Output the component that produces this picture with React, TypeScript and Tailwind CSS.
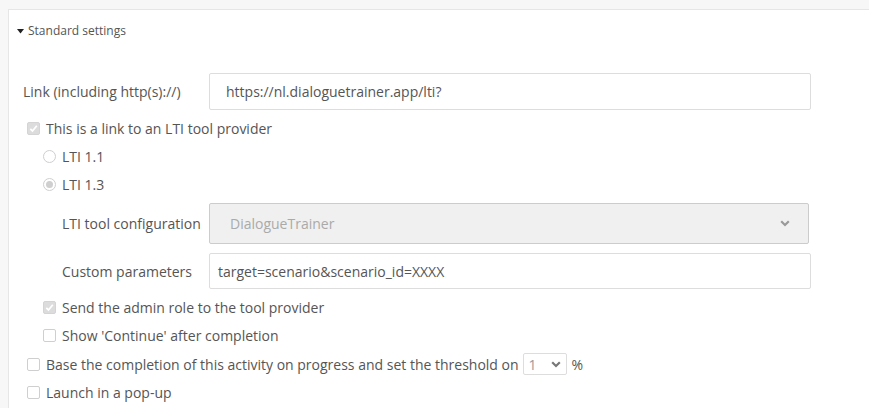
import React from 'react';

const Check = ({ checked = false }: { checked?: boolean }) => (
  <span
    className={`flex h-[13px] w-[13px] shrink-0 items-center justify-center rounded-[2px] border ${
      checked ? 'border-[#d4d4d4] bg-[#dcdcdc]' : 'border-[#cfcfcf] bg-white'
    }`}
  >
    {checked && (
      <svg width="9" height="9" viewBox="0 0 9 9">
        <path d="M1.3 4.8 L3.5 7 L7.8 1.8" fill="none" stroke="#fff" strokeWidth="1.8" />
      </svg>
    )}
  </span>
);

const Radio = ({ checked = false }: { checked?: boolean }) => (
  <span className="flex h-[13px] w-[13px] shrink-0 items-center justify-center rounded-full border border-[#cfcfcf] bg-white">
    {checked && <span className="h-[7px] w-[7px] rounded-full bg-[#cfcfcf]" />}
  </span>
);

const Chevron = ({ color = '#8a8a8a' }: { color?: string }) => (
  <svg width="10" height="7" viewBox="0 0 10 7">
    <path d="M1.2 1.3 L5 5 L8.8 1.3" fill="none" stroke={color} strokeWidth="2.2" />
  </svg>
);

const Option: React.FC<{ indent?: boolean; children: React.ReactNode }> = ({ indent, children }) => (
  <div className={`flex h-[28px] items-center gap-[6px] ${indent ? 'pl-[34px]' : 'pl-[18px]'}`}>
    {children}
  </div>
);

export default function App() {
  return (
    <div
      className="h-[408px] w-[869px] overflow-hidden bg-[#f7f7f7] pl-[8px] pt-[9px] text-[14px] text-[#555]"
      style={{ fontFamily: '"Open Sans", "Liberation Sans", sans-serif' }}
    >
      <div className="h-[420px] border border-r-0 border-[#e6e6e6] bg-white">
        {/* header */}
        <div className="flex h-[42px] items-center gap-[4px] pl-[8px] text-[12px]">
          <svg width="7" height="5" viewBox="0 0 7 5">
            <path d="M0 0 H7 L3.5 4.5 Z" fill="#222" />
          </svg>
          <span>Standard settings</span>
        </div>

        {/* link */}
        <div className="mt-[21px] flex items-center">
          <label className="w-[200px] pl-[14px]">Link (including http(s)://)</label>
          <div className="flex h-[37px] w-[602px] items-center rounded-[2px] border border-[#ddd] px-[16px]">
            https://nl.dialoguetrainer.app/lti?
          </div>
        </div>

        <div className="mt-[4px]">
          <Option>
            <Check checked />
            <span>This is a link to an LTI tool provider</span>
          </Option>
          <Option indent>
            <Radio />
            <span>LTI 1.1</span>
          </Option>
          <Option indent>
            <Radio checked />
            <span>LTI 1.3</span>
          </Option>
        </div>

        <div className="mt-[5px] flex items-center">
          <label className="w-[200px] pl-[53px]">LTI tool configuration</label>
          <div className="flex h-[41px] w-[600px] items-center justify-between rounded-[2px] border border-[#ccc] bg-[#f0f0f0] pl-[20px] pr-[18px] text-[#aaa]">
            <span>DialogueTrainer</span>
            <Chevron color="#999" />
          </div>
        </div>

        <div className="mt-[9px] flex items-center">
          <label className="w-[200px] pl-[53px]">Custom parameters</label>
          <div className="flex h-[36px] w-[602px] items-center rounded-[2px] border border-[#ddd] px-[8px]">
            target=scenario&amp;scenario_id=XXXX
          </div>
        </div>

        <div className="mt-[4px]">
          <Option indent>
            <Check checked />
            <span>Send the admin role to the tool provider</span>
          </Option>
          <Option indent>
            <Check />
            <span>Show 'Continue' after completion</span>
          </Option>
          <div className="mt-[1px]">
            <Option>
              <Check />
              <span className="flex items-center">
                Base the completion of this activity on progress and set the threshold on
                <span className="ml-[4px] mr-[5px] flex h-[22px] w-[44px] items-center justify-between rounded-[2px] border border-[#ddd] pl-[5px] pr-[5px] text-[#999]">
                  <span>1</span>
                  <Chevron color="#777" />
                </span>
                %
              </span>
            </Option>
          </div>
          <Option>
            <Check />
            <span>Launch in a pop-up</span>
          </Option>
        </div>
      </div>
    </div>
  );
}
